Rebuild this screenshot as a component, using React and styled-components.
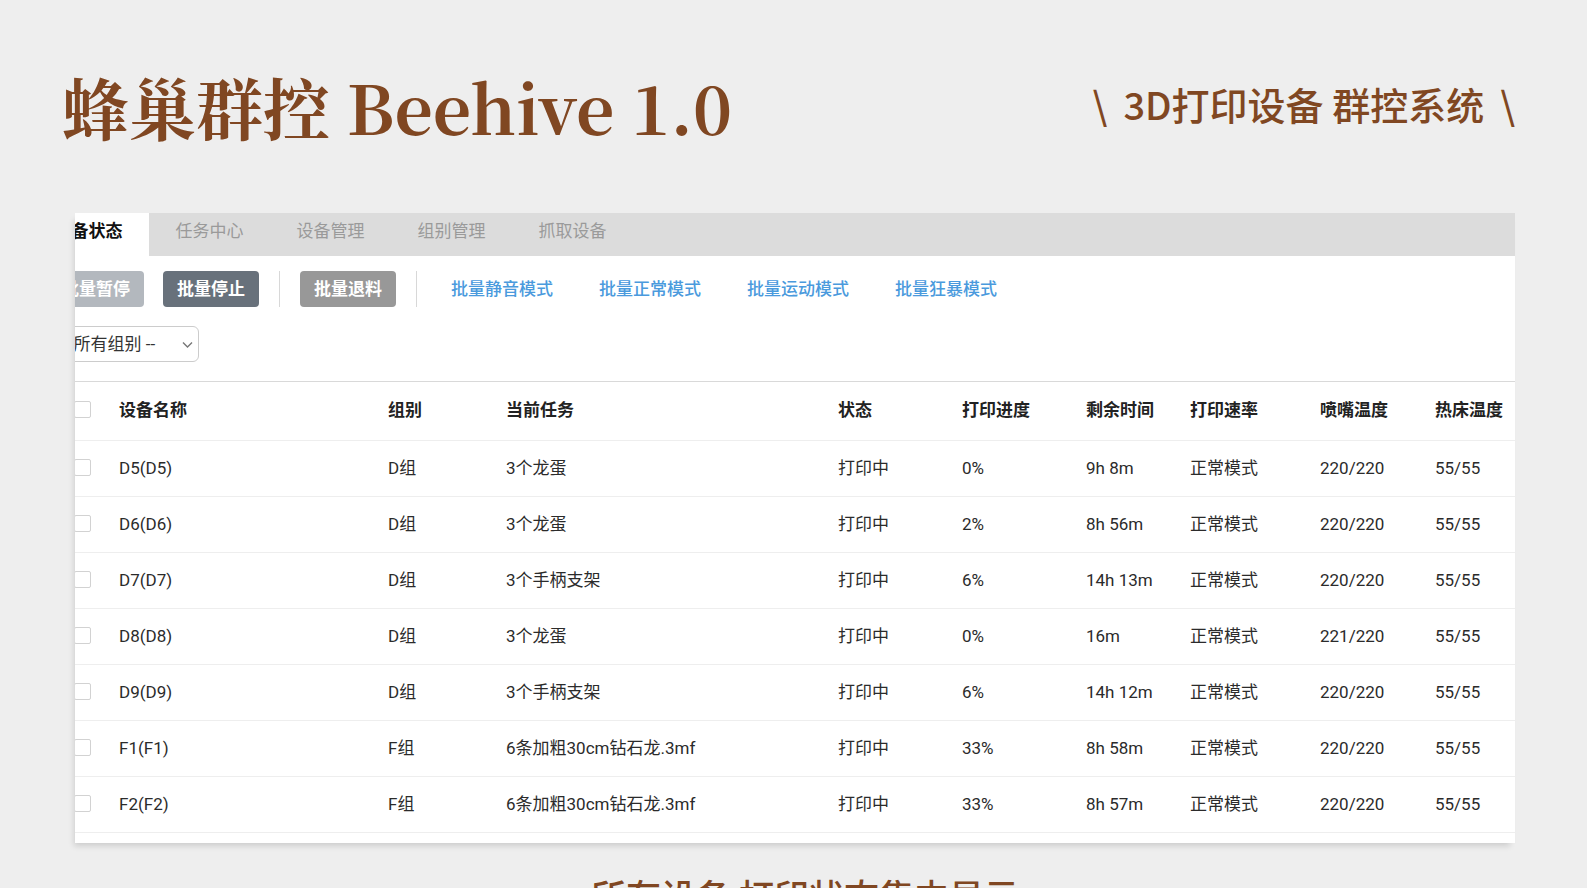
import React, { useState } from "react";
import styled, { createGlobalStyle } from "styled-components";

const GlobalStyle = createGlobalStyle`
  *, *::before, *::after { box-sizing: border-box; }
  body {
    margin: 0;
    background: #eeeeee;
    font-family: Roboto, "Noto Sans CJK SC", sans-serif;
    font-size: 17px;
    color: #2b2b2b;
  }
  button, select, input { font: inherit; }
`;

const Page = styled.div`
  height: 100vh;
  overflow: hidden;
  padding: 56px 72px 0 75px;
`;

const Header = styled.header`
  display: flex;
  justify-content: space-between;
  align-items: center;
  height: 100px;
  margin: 0 0 57px -13px;
  color: #804722;
  white-space: nowrap;
`;

const Title = styled.h1`
  margin: 0;
  font-family: "Noto Serif CJK SC", "Liberation Serif", "Noto Sans CJK SC", serif;
  font-size: 67px;
  line-height: 100px;
  font-weight: 700;
`;

const Tagline = styled.p`
  display: flex;
  gap: 16px;
  margin: 0 0 4px;
  font-family: "Noto Sans CJK SC", sans-serif;
  font-size: 38px;
  line-height: 56px;
  font-weight: 500;
`;

const Panel = styled.main`
  overflow: hidden;
  background: #ffffff;
  padding-bottom: 10px;
  box-shadow: -3px 5px 6px -2px rgba(0, 0, 0, 0.14);
`;

const Tabs = styled.nav`
  display: flex;
  height: 43px;
  background: #dcdcdc;
`;

const TabList = styled.div`
  display: flex;
  margin-left: -47px;
`;

const Tab = styled.button`
  width: 121px;
  padding: 0 0 10px;
  border: 0;
  white-space: nowrap;
  background: ${(p) => (p.$active ? "#ffffff" : "transparent")};
  color: ${(p) => (p.$active ? "#111111" : "#9a9a9a")};
  font-weight: ${(p) => (p.$active ? 700 : 400)};
`;

const Toolbar = styled.div`
  display: flex;
  align-items: center;
  gap: 19px;
  margin: 15px 0 0 -27px;
`;

const ActionButton = styled.button`
  flex: none;
  width: 96px;
  height: 36px;
  padding: 0 0 3px;
  border: 0;
  border-radius: 4px;
  background: ${(p) => p.$color};
  color: #ffffff;
  font-weight: 700;
`;

const Divider = styled.span`
  width: 1px;
  height: 36px;
  margin: 0 1px;
  background: #d8d8d8;
`;

const ModeGroup = styled.div`
  display: flex;
  gap: 18px;
`;

const ModeButton = styled.button`
  height: 36px;
  padding: 0 14px 3px;
  border: 0;
  background: transparent;
  color: #4a9add;
  font-weight: 500;
  white-space: nowrap;
`;

const Filter = styled.div`
  position: relative;
  width: 151px;
  margin: 19px 0 19px -27px;
`;

const GroupSelect = styled.select`
  display: block;
  width: 100%;
  height: 36px;
  padding: 0 28px 0 11px;
  border: 1px solid #cccccc;
  border-radius: 6px;
  background: #ffffff;
  color: #333333;
  appearance: none;
`;

const Chevron = styled.svg`
  position: absolute;
  right: 6px;
  top: 14px;
  width: 11px;
  height: 10px;
  pointer-events: none;
`;

const TableClip = styled.div`
  margin-left: -47px;
  border-top: 1px solid #d9d9d9;
`;

const DeviceTable = styled.table`
  width: 100%;
  table-layout: fixed;
  border-collapse: separate;
  border-spacing: 0;
  line-height: 24px;
`;

const Column = styled.col`
  width: ${(p) => (p.$width ? `${p.$width}px` : "auto")};
`;

const HeadCell = styled.th`
  height: 59px;
  padding: 0 0 3px;
  border-bottom: 1px solid #eeeeee;
  text-align: left;
  font-weight: 700;
  color: #222222;
  white-space: nowrap;
`;

const Cell = styled.td`
  height: 56px;
  padding: 0 0 2px;
  border-bottom: 1px solid #eeeeee;
  white-space: nowrap;
`;

const Check = styled.input`
  display: block;
  appearance: none;
  width: 17px;
  height: 17px;
  margin: 0 0 0 46px;
  border: 1px solid #d2d2d2;
  border-radius: 2px;
  background: ${(p) => (p.checked ? "#3f93d9" : "#ffffff")};
`;

const Caption = styled.p`
  margin: 26px 0 0;
  padding-left: 20px;
  text-align: center;
  font-family: "Noto Sans CJK SC", sans-serif;
  font-size: 35px;
  line-height: 52px;
  font-weight: 500;
  color: #804722;
  white-space: nowrap;
`;

const tabs = ["设备状态", "任务中心", "设备管理", "组别管理", "抓取设备"];
const modes = ["批量静音模式", "批量正常模式", "批量运动模式", "批量狂暴模式"];

const columns = [
  { label: "设备名称", width: 269 },
  { label: "组别", width: 118 },
  { label: "当前任务" },
  { label: "状态", width: 124 },
  { label: "打印进度", width: 124 },
  { label: "剩余时间", width: 104 },
  { label: "打印速率", width: 130 },
  { label: "喷嘴温度", width: 115 },
  { label: "热床温度", width: 80 },
];

const devices = [
  ["D5(D5)", "D组", "3个龙蛋", "打印中", "0%", "9h 8m", "正常模式", "220/220", "55/55"],
  ["D6(D6)", "D组", "3个龙蛋", "打印中", "2%", "8h 56m", "正常模式", "220/220", "55/55"],
  ["D7(D7)", "D组", "3个手柄支架", "打印中", "6%", "14h 13m", "正常模式", "220/220", "55/55"],
  ["D8(D8)", "D组", "3个龙蛋", "打印中", "0%", "16m", "正常模式", "221/220", "55/55"],
  ["D9(D9)", "D组", "3个手柄支架", "打印中", "6%", "14h 12m", "正常模式", "220/220", "55/55"],
  ["F1(F1)", "F组", "6条加粗30cm钻石龙.3mf", "打印中", "33%", "8h 58m", "正常模式", "220/220", "55/55"],
  ["F2(F2)", "F组", "6条加粗30cm钻石龙.3mf", "打印中", "33%", "8h 57m", "正常模式", "220/220", "55/55"],
];

export default function App() {
  const [tab, setTab] = useState(tabs[0]);
  const [selected, setSelected] = useState([]);

  const toggle = (name) =>
    setSelected((list) =>
      list.includes(name) ? list.filter((n) => n !== name) : [...list, name]
    );
  const allSelected = selected.length === devices.length;

  return (
    <Page>
      <GlobalStyle />
      <Header>
        <Title>蜂巢群控 Beehive 1.0</Title>
        <Tagline>
          <span>\</span>
          <span>3D打印设备 群控系统</span>
          <span>\</span>
        </Tagline>
      </Header>

      <Panel>
        <Tabs>
          <TabList>
            {tabs.map((t) => (
              <Tab key={t} type="button" $active={t === tab} onClick={() => setTab(t)}>
                {t}
              </Tab>
            ))}
          </TabList>
        </Tabs>

        <Toolbar>
          <ActionButton type="button" $color="#b3b8be">批量暂停</ActionButton>
          <ActionButton type="button" $color="#68717b">批量停止</ActionButton>
          <Divider />
          <ActionButton type="button" $color="#989898">批量退料</ActionButton>
          <Divider />
          <ModeGroup>
            {modes.map((m) => (
              <ModeButton key={m} type="button">{m}</ModeButton>
            ))}
          </ModeGroup>
        </Toolbar>

        <Filter>
          <GroupSelect aria-label="组别" defaultValue="all">
            <option value="all">-- 所有组别 --</option>
            <option value="D">D组</option>
            <option value="F">F组</option>
          </GroupSelect>
          <Chevron viewBox="0 0 11 10" fill="none" stroke="#777777" strokeWidth="1.4">
            <path d="M1 2.5 L5.5 7 L10 2.5" />
          </Chevron>
        </Filter>

        <TableClip>
          <DeviceTable>
            <colgroup>
              <Column $width={91} />
              {columns.map((c) => (
                <Column key={c.label} $width={c.width} />
              ))}
            </colgroup>
            <thead>
              <tr>
                <HeadCell>
                  <Check
                    type="checkbox"
                    aria-label="全选"
                    checked={allSelected}
                    onChange={() => setSelected(allSelected ? [] : devices.map((d) => d[0]))}
                  />
                </HeadCell>
                {columns.map((c) => (
                  <HeadCell key={c.label} scope="col">{c.label}</HeadCell>
                ))}
              </tr>
            </thead>
            <tbody>
              {devices.map((row) => (
                <tr key={row[0]}>
                  <Cell>
                    <Check
                      type="checkbox"
                      aria-label={row[0]}
                      checked={selected.includes(row[0])}
                      onChange={() => toggle(row[0])}
                    />
                  </Cell>
                  {row.map((value, i) => (
                    <Cell key={columns[i].label}>{value}</Cell>
                  ))}
                </tr>
              ))}
            </tbody>
          </DeviceTable>
        </TableClip>
      </Panel>

      <Caption>所有设备 打印状态集中显示</Caption>
    </Page>
  );
}
